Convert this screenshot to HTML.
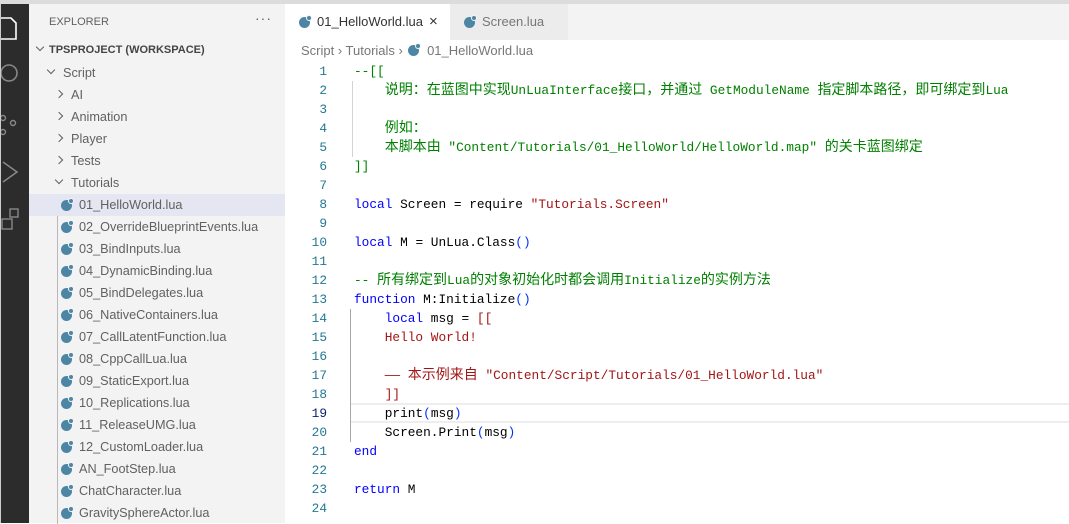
<!DOCTYPE html>
<html><head><meta charset="utf-8"><style>
*{margin:0;padding:0;box-sizing:border-box}
body{width:1069px;height:523px;overflow:hidden;background:#fff;position:relative;font-family:"Liberation Sans","Noto Sans CJK SC",sans-serif}
#top{position:absolute;left:0;top:0;width:1069px;height:4px;background:#dcdcdc}
#act{position:absolute;left:0;top:4px;width:29px;height:519px;background:#2c2c2c;border-left:1px solid #ccc}
#side{position:absolute;left:29px;top:4px;width:256px;height:519px;background:#f3f3f3;font-size:12.7px;color:#616161}
.row{position:absolute;height:22px;line-height:22px;white-space:nowrap;left:0;width:256px}
.sel{background:#e4e6f1}
.chev{position:absolute;top:7px;width:6px;height:6px;border-right:1.2px solid #616161;border-bottom:1.2px solid #616161}
.down{transform:rotate(45deg);top:5px}
.right{transform:rotate(-45deg)}
.ic{position:absolute;top:6px;width:11px;height:11px;border-radius:50%;background:#4d86a5}
.ic:after{content:"";position:absolute;right:-2px;top:-2px;width:4px;height:4px;border-radius:50%;background:#4d86a5;border:1px solid #f3f3f3}
#tabs{position:absolute;left:285px;top:4px;width:784px;height:36px;background:#f3f3f3}
.tab{position:absolute;top:0;height:36px;line-height:36px;font-size:13px}
#bc{position:absolute;left:301px;top:42px;font-size:13px;color:#777;line-height:18px}
.ln{position:absolute;left:290px;width:37px;text-align:right;font:12.8px/19px "Liberation Mono",monospace;color:#237893;height:19px}
.code{position:absolute;left:354px;font:12.8px/19px "Liberation Mono","Noto Sans CJK SC",monospace;color:#000;white-space:pre;height:19px}
.z{font-size:14px;line-height:19px}
.k{color:#0000ff}.s{color:#a31515}.c{color:#008000}.p{color:#0431fa}
</style></head><body>
<div id="top"></div>
<div id="act">
<svg width="29" height="519" style="position:absolute;left:0;top:0">
<path d="M0 14 H10 L15 19 V35 H0" fill="none" stroke="#fff" stroke-width="1.6"/>
<circle cx="8" cy="69" r="8" fill="none" stroke="#888" stroke-width="1.6"/>
<circle cx="2" cy="114" r="2.5" fill="none" stroke="#888" stroke-width="1.4"/><circle cx="12" cy="119" r="2.5" fill="none" stroke="#888" stroke-width="1.4"/><circle cx="2" cy="128" r="2.5" fill="none" stroke="#888" stroke-width="1.4"/>
<path d="M2 158 L16 168 L2 178" fill="none" stroke="#888" stroke-width="1.5"/>
<rect x="9" y="205" width="8" height="8" fill="none" stroke="#888" stroke-width="1.4"/><rect x="1" y="215" width="10" height="10" fill="none" stroke="#888" stroke-width="1.4"/>
</svg></div>
<div id="side">
<div class="row" style="top:7px;font-size:11px;padding-left:20px">EXPLORER<span style="position:absolute;left:226px;font-size:14px;letter-spacing:1px;top:-4px">···</span></div>
<div class="row" style="top:35px;font-weight:bold;font-size:11px;color:#444"><span class="chev down" style="left:8px"></span><span style="position:absolute;left:20px">TPSPROJECT (WORKSPACE)</span></div>
<div class="row" style="top:58px"><span class="chev down" style="left:19px"></span><span style="position:absolute;left:34px">Script</span></div>
<div class="row" style="top:80px"><span class="chev right" style="left:27px"></span><span style="position:absolute;left:42px">AI</span></div>
<div class="row" style="top:102px"><span class="chev right" style="left:27px"></span><span style="position:absolute;left:42px">Animation</span></div>
<div class="row" style="top:124px"><span class="chev right" style="left:27px"></span><span style="position:absolute;left:42px">Player</span></div>
<div class="row" style="top:146px"><span class="chev right" style="left:27px"></span><span style="position:absolute;left:42px">Tests</span></div>
<div class="row" style="top:168px"><span class="chev down" style="left:27px"></span><span style="position:absolute;left:42px">Tutorials</span></div>
<div style="position:absolute;left:28px;top:190px;width:1px;height:330px;background:#b8b8b8"></div>
<div id="files"></div>
</div>
<div id="tabs">
<div class="tab" style="left:0;width:165px;background:#fff;color:#333"><span class="ic" style="left:14px;top:13px"></span><span style="position:absolute;left:32px">01_HelloWorld.lua</span><span style="position:absolute;left:144px;font-size:15px">×</span></div>
<div class="tab" style="left:165px;width:118px;background:#ececec;color:#777"><span class="ic" style="left:14px;top:13px"></span><span style="position:absolute;left:32px">Screen.lua</span></div>
</div>
<div id="bc">Script › Tutorials › <span class="ic" style="position:relative;display:inline-block;top:1px;margin:0 4px 0 2px"></span> 01_HelloWorld.lua</div>
<div style="position:absolute;left:350px;top:403px;width:719px;height:20px;border-top:2px solid #eee;border-bottom:2px solid #eee"></div>
<div style="position:absolute;left:352px;top:81px;width:1px;height:76px;background:#d3d3d3"></div>
<div style="position:absolute;left:350px;top:309px;width:1px;height:133px;background:#a8a8a8"></div>
<div id="ed"></div>
<script>
var f=["01_HelloWorld.lua","02_OverrideBlueprintEvents.lua","03_BindInputs.lua","04_DynamicBinding.lua","05_BindDelegates.lua","06_NativeContainers.lua","07_CallLatentFunction.lua","08_CppCallLua.lua","09_StaticExport.lua","10_Replications.lua","11_ReleaseUMG.lua","12_CustomLoader.lua","AN_FootStep.lua","ChatCharacter.lua","GravitySphereActor.lua"];
var h="";f.forEach(function(n,i){h+='<div class="row'+(i==0?' sel':'')+'" style="top:'+(190+22*i)+'px"><span class="ic" style="left:32px"></span><span style="position:absolute;left:50px">'+n+'</span></div>'});
document.getElementById("files").innerHTML=h;
var L=['<span class="c">--[[</span>','<span class="c">    说明：在蓝图中实现UnLuaInterface接口，并通过 GetModuleName 指定脚本路径，即可绑定到Lua</span>','','<span class="c">    例如：</span>','<span class="c">    本脚本由 "Content/Tutorials/01_HelloWorld/HelloWorld.map" 的关卡蓝图绑定</span>','<span class="c">]]</span>','','<span class="k">local</span> Screen = require <span class="s">"Tutorials.Screen"</span>','','<span class="k">local</span> M = UnLua.Class<span class="p">()</span>','','<span class="c">-- 所有绑定到Lua的对象初始化时都会调用Initialize的实例方法</span>','<span class="k">function</span> M:Initialize<span class="p">()</span>','    <span class="k">local</span> msg = <span class="s">[[</span>','<span class="s">    Hello World!</span>','','<span class="s">    —— 本示例来自 "Content/Script/Tutorials/01_HelloWorld.lua"</span>','<span class="s">    ]]</span>','    print<span class="p">(</span>msg<span class="p">)</span>','    Screen.Print<span class="p">(</span>msg<span class="p">)</span>','<span class="k">end</span>','','<span class="k">return</span> M',''];
var e="";L.forEach(function(t,i){var y=62+19*i;t=t.replace(/([\u3000-\u9fff\uff00-\uffef]+)/g,'<span class="z">$1</span>');e+='<div class="ln" style="top:'+y+'px;'+(i==18?'color:#0b216f':'')+'">'+(i+1)+'</div><div class="code" style="top:'+y+'px">'+t+'</div>'});
document.getElementById("ed").innerHTML=e;
</script>
</body></html>
